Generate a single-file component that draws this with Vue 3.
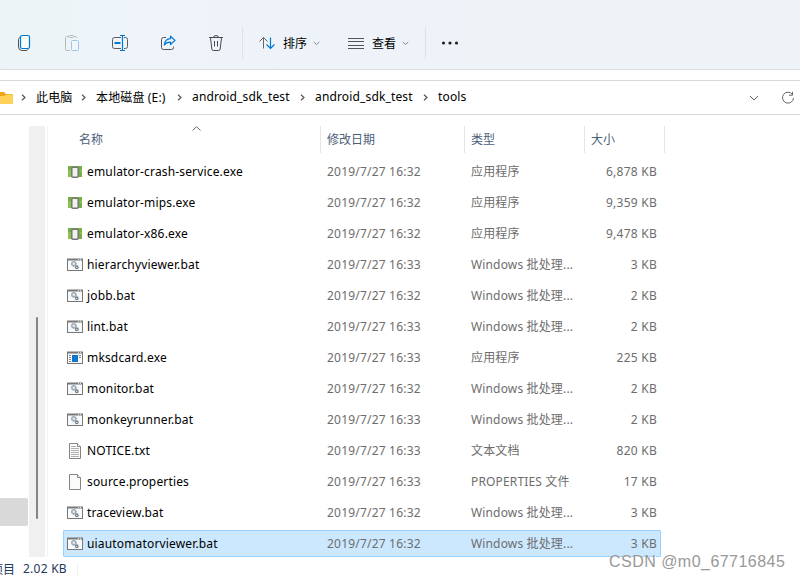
<template>
  <div class="explorer">
    <header class="toolbar">
      <button class="tool">
        <svg width="16" height="18" viewBox="0 0 16 18" fill="none">
          <path d="M4.5 3.5H3.8Q2.5 4 2.5 5.5V13Q2.5 16.5 6 16.5H10Q11.5 16.5 12 15.2" stroke="#555" />
          <rect x="4.5" y="1.5" width="9" height="13" rx="1.8" fill="#f8fafb" stroke="#0078d4" stroke-width="1.2" />
        </svg>
      </button>
      <button class="tool">
        <svg width="16" height="18" viewBox="0 0 16 18" fill="none">
          <path d="M5 2.5H2.5Q1.5 2.5 1.5 3.5V15.5Q1.5 16.5 2.5 16.5H6M10 2.5H11.5Q12.5 2.5 12.5 4" stroke="#b5babd" />
          <rect x="4.5" y="1.5" width="5" height="2" rx="1" stroke="#b5babd" />
          <rect x="7.5" y="6.5" width="7" height="10" rx="1" fill="#f1f6fa" stroke="#9bc8ea" />
        </svg>
      </button>
      <button class="tool">
        <svg width="16" height="18" viewBox="0 0 16 18" fill="none">
          <path d="M9 3.5H2.5Q.5 3.5 .5 5.5V12.5Q.5 14.5 2.5 14.5H9M12 3.5H13.5Q15.5 3.5 15.5 5.5V12.5Q15.5 14.5 13.5 14.5H12" stroke="#5b5d60" />
          <path d="M10.5 1.5V16.5M8 1.5H13M8 16.5H13" stroke="#0078d4" stroke-width="1.2" />
          <path d="M2.5 9H8.5" stroke="#0078d4" stroke-width="2" />
        </svg>
      </button>
      <button class="tool">
        <svg width="16" height="18" viewBox="0 0 16 18" fill="none">
          <path d="M6 3.5H3.5Q1.5 3.5 1.5 5.5V13.5Q1.5 15.5 3.5 15.5H11.5Q13.500 15.5 13.5 13.5V12.5" stroke="#555" />
          <path d="M10.5 2.2L15 6.4L10.5 10.5V8.2Q6.5 8 4.3 11Q4.8 4.9 10.5 4.6Z" stroke="#0078d4" stroke-width="1.2" stroke-linejoin="round" />
        </svg>
      </button>
      <button class="tool">
        <svg width="16" height="18" viewBox="0 0 16 18" fill="none" stroke="#4c4c4c">
          <path d="M1 3.5H15M5.5 3.5Q5.5 1.5 8 1.5Q10.5 1.5 10.5 3.5M2.5 3.5L3.8 15Q4 16.5 5.3 16.5H10.7Q12 16.5 12.2 15L13.5 3.5" />
          <path d="M6.5 7V12.5M9.5 7V12.5" />
        </svg>
      </button>
      <div class="tool-group">
        <svg width="16" height="14" viewBox="0 0 16 14" fill="none">
          <path d="M4.5 12.5V1.5M.5 5.5L4.5 1.5L8.5 5.5" stroke="#666" />
          <path d="M11.5 1.5V12.5M7.5 8.5L11.5 12.5L15.5 8.5" stroke="#0078d4" stroke-width="1.2" />
        </svg>
        <span class="tool-label">排序</span>
        <svg class="caret" width="7" height="5" viewBox="0 0 7 5"><path d="M.7 1L3.5 3.5L6.3 1" fill="none" stroke="#888" /></svg>
        <svg class="lines" width="16" height="11" viewBox="0 0 16 11">
          <path d="M0 .5H16M0 3.5H16M0 7.5H16M0 10.5H16" stroke="#555" />
        </svg>
        <span class="tool-label">查看</span>
        <svg class="caret" width="7" height="5" viewBox="0 0 7 5"><path d="M.7 1L3.5 3.5L6.3 1" fill="none" stroke="#888" /></svg>
      </div>
      <svg class="more" width="18" height="4" viewBox="0 0 18 4" fill="#222">
        <circle cx="2.5" cy="2" r="1.6" /><circle cx="9" cy="2" r="1.6" /><circle cx="15.5" cy="2" r="1.6" />
      </svg>
    </header>

    <nav class="address">
      <svg class="folder" width="13" height="14" viewBox="0 0 13 14">
        <path d="M0 1H4L6 3H12Q13 3 13 4V6H0Z" fill="#eda512" />
        <path d="M0 5H4L6 3.500H12Q13 3.5 13 4.5V12Q13 13 12 13H0Z" fill="#ffd05a" />
      </svg>
      <template v-for="crumb in crumbs" :key="crumb.id">
        <svg class="crumb-arrow" width="5" height="7" viewBox="0 0 5 7"><path d="M1 .7L4 3.5L1 6.3" fill="none" stroke="#555" stroke-width="1.2" /></svg>
        <span class="crumb" :style="{ width: crumb.width + 'px' }">{{ crumb.text }}</span>
      </template>
      <svg class="history" width="10" height="6" viewBox="0 0 10 6"><path d="M1 1L5 5L9 1" fill="none" stroke="#666" /></svg>
      <svg class="refresh" width="14" height="14" viewBox="0 0 14 14" fill="none" stroke="#666">
        <path d="M11.5 3.5A5.5 5.5 0 1 0 12.5 7M11.5 .8V4.2H8" />
      </svg>
    </nav>

    <main class="content">
      <aside class="tree"><div class="tree-active"></div></aside>
      <div class="scrollbar"><div class="thumb"></div></div>
      <section class="files">
        <div class="head">
          <div class="th th-name">
            名称
            <svg class="sort-mark" width="9" height="5" viewBox="0 0 9 5"><path d="M.5 4.5L4.5 .7L8.5 4.5" fill="none" stroke="#666" /></svg>
          </div>
          <div class="th th-date">修改日期</div>
          <div class="th th-type">类型</div>
          <div class="th th-size">大小</div>
        </div>
        <div
          v-for="file in files"
          :key="file.name"
          class="row"
          :class="{ selected: file.name === selected }"
          @click="selected = file.name"
        >
          <svg v-if="file.icon === 'emu'" class="icon" width="16" height="16" viewBox="0 0 16 16">
            <path d="M1 2H15V13H1Z" fill="#8bc34a" />
            <path d="M1 2H15V6H1Z" fill="#76b043" />
            <path d="M10 4L15 9V13H8Z" fill="#79aa4a" />
            <rect x="4.8" y="3.3" width="6.4" height="10" rx="1" fill="#f1f1f1" stroke="#777" stroke-width="1.5" />
          </svg>
          <svg v-else-if="file.icon === 'bat'" class="icon" width="16" height="16" viewBox="0 0 16 16">
            <rect x=".5" y="2.5" width="15" height="11" fill="#f8f9fa" stroke="#777" />
            <path d="M0 2.5H16" stroke="#777" stroke-width="2" />
            <path d="M11 2.5H12M13 2.5H14" stroke="#ddd" />
            <circle cx="6.8" cy="6.8" r="2" fill="#e5eaee" stroke="#a2adb8" stroke-width="1.5" />
            <path d="M6.8 4V5M6.8 9V10M4 6.8H5M9 6.8H10" stroke="#a2adb8" />
            <circle cx="9.8" cy="10.3" r="1.3" fill="#fff" stroke="#77818b" stroke-width="1.3" />
          </svg>
          <svg v-else-if="file.icon === 'exe'" class="icon" width="16" height="16" viewBox="0 0 16 16">
            <rect x=".5" y="2.5" width="15" height="11" fill="#fafafa" stroke="#777" />
            <path d="M0 2.5H16" stroke="#777" stroke-width="2" />
            <path d="M11 2.5H12M13 2.5H14" stroke="#ddd" />
            <rect x="5" y="5" width="6" height="7" fill="#0f78ce" />
            <path d="M2 5.5H4M2 7.5H4M2 9.5H4M2 11.5H4M12 5.5H14M12 7.5H14" stroke="#888" />
          </svg>
          <svg v-else class="icon" width="16" height="16" viewBox="0 0 16 16">
            <path d="M2.5 .5H10.5L13.5 3.5V15.5H2.5Z" fill="#fafafa" stroke="#858585" />
            <path d="M10.5 .5V3.5H13.5" fill="#fff" stroke="#858585" />
            <path v-if="file.icon === 'txt'" d="M4 3.5H9M4 5.5H12M4 7.5H12M4 9.5H12M4 11.5H12M4 13.5H12" stroke="#b0b0b0" />
          </svg>
          <span class="name">{{ file.name }}</span>
          <span class="date">{{ file.date }}</span>
          <span class="type">{{ file.type }}</span>
          <span class="size">{{ file.size }} KB</span>
        </div>
      </section>
    </main>

    <footer class="status">
      <span class="status-items">项目</span>
      <span class="status-size">2.02 KB</span>
    </footer>
    <div class="watermark">CSDN @m0_67716845</div>
  </div>
</template>

<script setup>
import { ref } from 'vue'

const selected = ref('uiautomatorviewer.bat')

const crumbs = [
  { id: 1, text: '此电脑', width: 35 },
  { id: 2, text: '本地磁盘 (E:)', width: 71 },
  { id: 3, text: 'android_sdk_test', width: 98 },
  { id: 4, text: 'android_sdk_test', width: 98 },
  { id: 5, text: 'tools', width: 40 }
]

const APP = '应用程序'
const BAT = 'Windows 批处理...'

const files = [
  { name: 'emulator-crash-service.exe', icon: 'emu', date: '2019/7/27 16:32', type: APP, size: '6,878' },
  { name: 'emulator-mips.exe', icon: 'emu', date: '2019/7/27 16:32', type: APP, size: '9,359' },
  { name: 'emulator-x86.exe', icon: 'emu', date: '2019/7/27 16:32', type: APP, size: '9,478' },
  { name: 'hierarchyviewer.bat', icon: 'bat', date: '2019/7/27 16:33', type: BAT, size: '3' },
  { name: 'jobb.bat', icon: 'bat', date: '2019/7/27 16:32', type: BAT, size: '2' },
  { name: 'lint.bat', icon: 'bat', date: '2019/7/27 16:33', type: BAT, size: '2' },
  { name: 'mksdcard.exe', icon: 'exe', date: '2019/7/27 16:33', type: APP, size: '225' },
  { name: 'monitor.bat', icon: 'bat', date: '2019/7/27 16:32', type: BAT, size: '2' },
  { name: 'monkeyrunner.bat', icon: 'bat', date: '2019/7/27 16:33', type: BAT, size: '2' },
  { name: 'NOTICE.txt', icon: 'txt', date: '2019/7/27 16:33', type: '文本文档', size: '820' },
  { name: 'source.properties', icon: 'file', date: '2019/7/27 16:33', type: 'PROPERTIES 文件', size: '17' },
  { name: 'traceview.bat', icon: 'bat', date: '2019/7/27 16:32', type: BAT, size: '3' },
  { name: 'uiautomatorviewer.bat', icon: 'bat', date: '2019/7/27 16:32', type: BAT, size: '3' }
]
</script>

<style>
body { margin: 0; background: #fff; overflow: hidden; }
</style>

<style scoped>
.explorer {
  position: relative; width: 800px; height: 579px; overflow: hidden;
  display: flex; flex-direction: column; background: #fff;
  font-family: "Noto Sans", "Noto Sans CJK SC", sans-serif; font-size: 12px; color: #000;
}
.explorer * { box-sizing: border-box; }
svg { display: block; flex: none; }
span { flex: none; white-space: nowrap; }

.toolbar {
  display: flex; align-items: center; flex: none; height: 70px; padding-top: 17px;
  background: linear-gradient(90deg, #edf4f7, #eef3fa 35%, #edf3f7 60%);
  border-bottom: 1px solid #dadde0;
}
.tool {
  display: flex; align-items: center; justify-content: center;
  width: 48px; height: 32px; padding: 0; border: none; background: none;
}
.tool-group {
  display: flex; align-items: center; width: 184px; height: 32px; margin-left: 2px; padding-left: 16px;
  border-left: 1px solid #dce1e5; border-right: 1px solid #dce1e5;
}
.tool-label { width: 24px; margin-left: 8px; }
.caret { margin-left: 6px; }
.lines { margin-left: 28px; }
.more { margin-left: 15px; }

.address {
  display: flex; align-items: center; flex: none; height: 35px; margin-top: 10px;
  border-top: 1px solid #d9d9d9; border-bottom: 1px solid #d9d9d9;
}
.folder { margin-right: 8px; }
.crumb { margin: 0 10px; padding-bottom: 2px; letter-spacing: .15px; }
.history { margin-left: auto; }
.refresh { margin: 0 5px 0 22px; }

.content { display: flex; flex: none; height: 442px; padding-top: 11px; }
.tree { width: 29px; padding-top: 372px; }
.tree-active { width: 28px; height: 28px; background: #d9d9d9; border-radius: 0 2px 2px 0; }
.scrollbar { width: 16px; padding: 191px 0 0 7px; background: #f0f0f0; }
.thumb { width: 2px; height: 202px; background: #858585; border-radius: 1px; }
.files { margin-left: 2px; padding-left: 15px; border-left: 1px solid #f3f3f3; }

.head { display: flex; height: 27px; margin-bottom: 5px; color: #4c607a; }
.th { position: relative; display: flex; align-items: center; padding: 0 0 1px 6px; border-right: 1px solid #e5e5e5; }
.th-name { width: 258px; padding-left: 16px; }
.th-date { width: 144px; }
.th-type { width: 120px; }
.th-size { width: 80px; }
.sort-mark { position: absolute; left: 129px; top: 0; }

.row {
  display: flex; align-items: center; width: 598px; height: 27px; margin-bottom: 4px;
  padding: 0 3px; border: 1px solid transparent; border-radius: 1px; color: #6d6d6d;
}
.row.selected { background: #cce8ff; border-color: #99d1ff; }
.icon { margin-right: 4px; }
.name { width: 240px; color: #000; letter-spacing: .16px; }
.date { width: 144px; letter-spacing: .2px; }
.type { width: 114px; padding-bottom: 2px; letter-spacing: .15px; }
.size { width: 72px; text-align: right; letter-spacing: .25px; }

.status { display: flex; align-items: center; flex: 1; padding-top: 1px; color: #1e395b; }
.status-items { width: 24px; margin-left: -9px; }
.status-size { width: 55px; height: 12px; margin-left: 8px; line-height: 12px; letter-spacing: .25px; border-right: 1px solid #eee; }

.watermark {
  position: absolute; left: 609px; top: 552px; font-family: "Liberation Sans", sans-serif;
  font-size: 16px; line-height: 19px; letter-spacing: .47px; color: #999; text-shadow: 1px 1px 0 #fff;
}
</style>
